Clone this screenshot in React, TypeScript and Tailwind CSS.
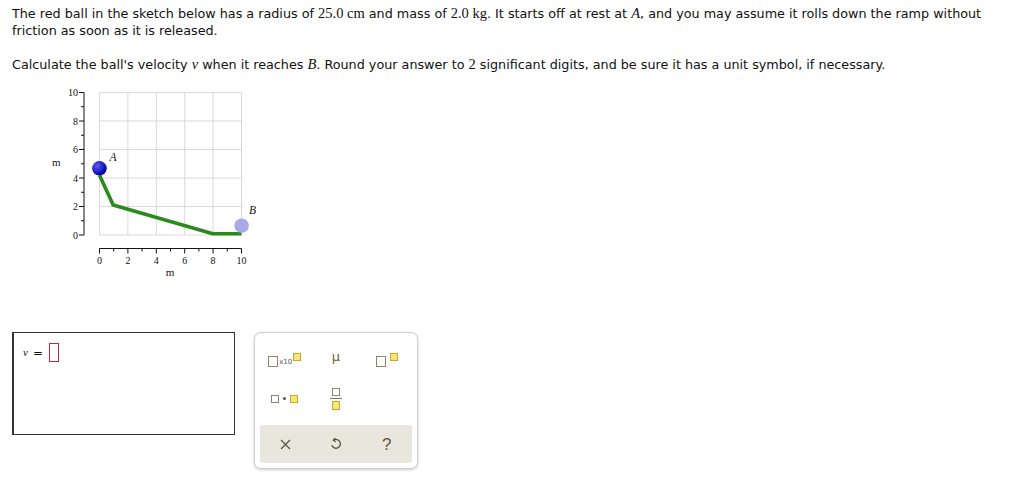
import React from "react";

const M = ({ children, i }: { children: React.ReactNode; i?: boolean }) => (
  <span className={`font-['Liberation_Serif',serif] text-[14.5px] ${i ? "italic" : ""}`}>{children}</span>
);

function Graph() {
  const x = (X: number) => 99.5 + 14.2 * X;
  const y = (Y: number) => 235 - 14.25 * Y;
  const units = [0, 1, 2, 3, 4, 5, 6, 7, 8, 9, 10];
  const evens = [0, 2, 4, 6, 8, 10];
  return (
    <svg width={230} height={200} viewBox="40 80 230 200" className="block ml-[40px] mt-[7px]">
      <defs>
        <radialGradient id="ballA" cx="35%" cy="35%" r="65%">
          <stop offset="0%" stopColor="#5a5aff" />
          <stop offset="100%" stopColor="#00009a" />
        </radialGradient>
      </defs>
      {evens.map((v) => (
        <line key={"gx" + v} x1={x(v)} x2={x(v)} y1={y(10)} y2={y(0)} stroke="#d9d9d9" strokeWidth={1} />
      ))}
      {evens.map((v) => (
        <line key={"gy" + v} x1={x(0)} x2={x(10)} y1={y(v)} y2={y(v)} stroke="#d9d9d9" strokeWidth={1} />
      ))}
      {/* left axis */}
      <line x1={84} x2={84} y1={y(10)} y2={y(0)} stroke="#111" strokeWidth={1} />
      {units.map((v) => (
        <line key={"lt" + v} x1={v % 2 === 0 ? 79 : 81} x2={84} y1={y(v)} y2={y(v)} stroke="#111" strokeWidth={1} />
      ))}
      {evens.map((v) => (
        <text key={"ll" + v} x={78} y={y(v) + 3.5} textAnchor="end" fontSize={10} fontFamily="Liberation Serif, serif" fill="#111">
          {v}
        </text>
      ))}
      <text x={52} y={166} fontSize={11} fontFamily="Liberation Serif, serif" fill="#111">m</text>
      {/* bottom axis */}
      <line x1={x(0)} x2={x(10)} y1={248.5} y2={248.5} stroke="#111" strokeWidth={1} />
      {units.map((v) => (
        <line key={"bt" + v} x1={x(v)} x2={x(v)} y1={248.5} y2={v % 2 === 0 ? 253.5 : 251.5} stroke="#111" strokeWidth={1} />
      ))}
      {evens.map((v) => (
        <text key={"bl" + v} x={x(v)} y={264} textAnchor="middle" fontSize={10} fontFamily="Liberation Serif, serif" fill="#111">
          {v}
        </text>
      ))}
      <text x={170} y={276} textAnchor="middle" fontSize={11} fontFamily="Liberation Serif, serif" fill="#111">m</text>
      {/* ramp */}
      <polyline
        points={`${x(0)},175.2 113.2,205.1 212.9,233.8 ${x(10)},233.8`}
        fill="none"
        stroke="#2c8a1c"
        strokeWidth={3.6}
        strokeLinejoin="round"
      />
      <circle cx={99.4} cy={168.3} r={7.3} fill="url(#ballA)" />
      <circle cx={241.6} cy={225.7} r={7.3} fill="#a9a9e9" />
      <text x={109.5} y={161} fontSize={11.5} fontStyle="italic" fontFamily="Liberation Serif, serif" fill="#111">A</text>
      <text x={249} y={214} fontSize={11.5} fontStyle="italic" fontFamily="Liberation Serif, serif" fill="#111">B</text>
    </svg>
  );
}

const GrayBox = ({ w = 10, h = 11 }: { w?: number; h?: number }) => (
  <span className="inline-block border-[1.5px] border-[#8c866f] bg-white" style={{ width: w, height: h }} />
);
const YelBox = ({ w = 8, h = 8 }: { w?: number; h?: number }) => (
  <span className="inline-block border-[1.5px] border-[#c9ac1e] bg-[#f8e37c]" style={{ width: w, height: h }} />
);

function Keypad() {
  return (
    <div className="ml-[19px] w-[164px] h-[137px] rounded-[7px] border border-[#cfcfcf] bg-white shadow-[0_1px_3px_rgba(0,0,0,0.2)] flex flex-col px-[4px] pb-[5px]">
      <div className="grid grid-cols-3 h-[46px] pt-[14px] items-start">
        <div className="flex justify-center">
          <div className="flex items-start">
            <div className="mt-[6px]"><GrayBox /></div>
            <span className="mt-[12px] ml-[1px] text-[7px] leading-none text-[#555] font-['DejaVu_Sans',sans-serif]">x10</span>
            <div className="ml-[1px]"><YelBox /></div>
          </div>
        </div>
        <div className="flex justify-center">
          <span className="mt-[3px] text-[13px] leading-none text-[#6b6440] font-['DejaVu_Sans',sans-serif]">μ</span>
        </div>
        <div className="flex justify-center">
          <div className="flex items-start">
            <div className="mt-[6px]"><GrayBox /></div>
            <div className="ml-[4px]"><YelBox /></div>
          </div>
        </div>
      </div>
      <div className="grid grid-cols-3 h-[47px] items-start pt-[9px]">
        <div className="flex justify-center">
          <div className="flex items-center mt-[7px]">
            <GrayBox w={8} h={8} />
            <span className="mx-[4px] w-[3px] h-[3px] rounded-full bg-[#555]" />
            <YelBox />
          </div>
        </div>
        <div className="flex justify-center">
          <div className="flex flex-col items-center">
            <GrayBox w={8} h={8} />
            <span className="my-[2px] w-[12px] h-[1px] bg-[#777]" />
            <YelBox w={8} h={9} />
          </div>
        </div>
        <div />
      </div>
      <div className="mt-auto h-[38px] rounded-[3px] bg-[#e9e7dd] grid grid-cols-3 items-center text-[#5b5436] mx-[1px]">
        <div className="flex justify-center">
          <svg width="11" height="11" viewBox="0 0 11 11"><path d="M1 1 L10 10 M10 1 L1 10" stroke="#5b5436" strokeWidth="1.3" /></svg>
        </div>
        <div className="flex justify-center">
          <svg width="12" height="14" viewBox="0 0 12 14">
            <path d="M5.5 1.2 L3.2 3.2 L5.8 4.8" fill="none" stroke="#5b5436" strokeWidth="1.3" strokeLinejoin="round" />
            <path d="M3.4 3.3 A 4.4 4.4 0 1 1 1.8 8.2" fill="none" stroke="#5b5436" strokeWidth="1.3" />
          </svg>
        </div>
        <div className="flex justify-center">
          <span className="text-[17px] leading-none font-['Liberation_Sans',sans-serif] text-[#5b5436]">?</span>
        </div>
      </div>
    </div>
  );
}

export default function App() {
  return (
    <div className="w-[1024px] h-[477px] bg-white overflow-hidden font-['DejaVu_Sans',sans-serif] text-[12.75px] text-[#111]">
      <div className="pl-[12px] pt-[5px] leading-[17px] whitespace-nowrap">
        <div>
          The red ball in the sketch below has a radius of <M>25.0 cm</M> and mass of <M>2.0 kg</M>. It starts off at rest at <M i>A</M>, and you may assume it rolls down the ramp without
        </div>
        <div>friction as soon as it is released.</div>
        <div className="mt-[17px]">
          Calculate the ball's velocity <M i>v</M> when it reaches <M i>B</M>. Round your answer to <M>2</M> significant digits, and be sure it has a unit symbol, if necessary.
        </div>
      </div>
      <Graph />
      <div className="flex mt-[52px]">
        <div className="ml-[12px] w-[223px] h-[103px] border border-[#333] border-l-2 bg-white">
          <div className="flex items-center pl-[9px] pt-[10px]">
            <span className="font-['Liberation_Serif',serif] italic text-[11px]">v</span>
            <span className="ml-[5px] text-[12px]">=</span>
            <span className="ml-[6px] w-[10px] h-[19px] border border-[#c42a48]" />
          </div>
        </div>
        <Keypad />
      </div>
    </div>
  );
}
